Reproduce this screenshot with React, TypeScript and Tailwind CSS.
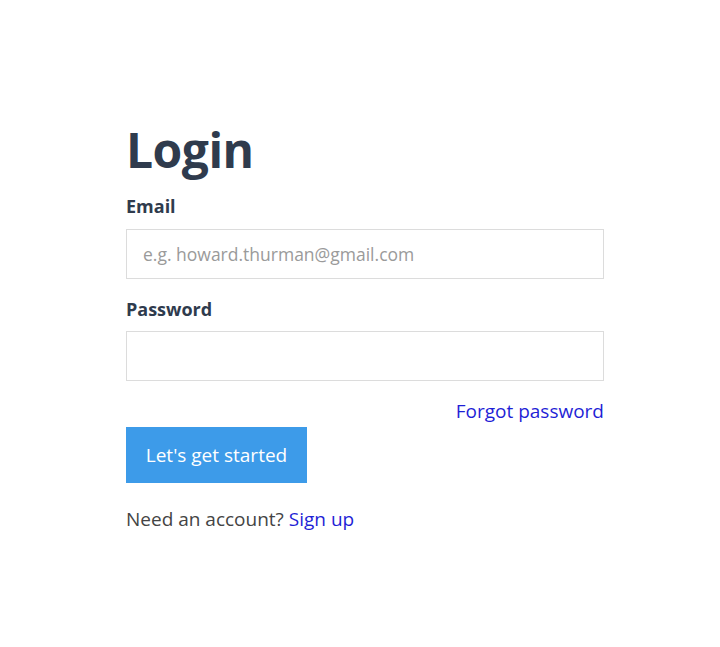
export default function App() {
  return (
    <div className="min-h-screen bg-white font-['Open_Sans',sans-serif]">
      <div className="ml-[126px] w-[478px] pt-[118px]">
        <h1 className="text-[48px] leading-[64px] font-bold tracking-[-0.5px] text-[#2f3b4d]">Login</h1>
        <form className="mt-[11px] flex flex-col" onSubmit={(e) => e.preventDefault()}>
          <label className="text-[18px] leading-[26px] font-bold text-[#2f3b4d]">Email</label>
          <input
            type="email"
            placeholder="e.g. howard.thurman@gmail.com"
            className="mt-[10px] h-[50px] w-full border border-[#dcdcdc] px-[16px] text-[17.5px] text-[#333] placeholder:text-[#9a9a9a] outline-none"
          />
          <label className="mt-[17px] text-[18px] leading-[26px] font-bold text-[#2f3b4d]">Password</label>
          <input type="password" className="mt-[9px] h-[50px] w-full border border-[#dcdcdc] px-[16px] text-[17px] outline-none" />
          <div className="mt-[18px] flex justify-end">
            <a href="#" className="text-[19px] leading-[24px] text-[#1f1fd6]">Forgot password</a>
          </div>
          <button type="submit" className="mt-[4px] h-[56px] w-[181px] bg-[#3d9be9] text-[19px] text-white">Let's get started</button>
          <p className="mt-[24px] text-[19px] leading-[24px] text-[#444]">
            Need an account? <a href="#" className="text-[#1f1fd6]">Sign up</a>
          </p>
        </form>
      </div>
    </div>
  );
}
